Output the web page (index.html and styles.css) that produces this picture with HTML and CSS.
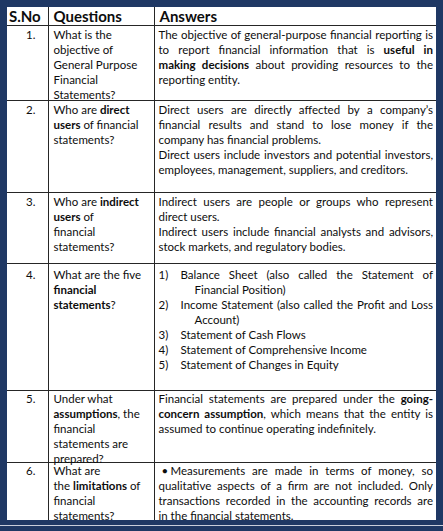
FILE: index.html
```html
<!DOCTYPE html>
<html lang="en">
<head>
<meta charset="utf-8">
<title>Financial Statements Q&amp;A</title>
<link rel="stylesheet" href="styles.css">
</head>
<body>
<div class="frame">
  <table class="qa">
    <colgroup>
      <col class="c-no"><col class="c-q"><col class="c-a">
    </colgroup>
    <thead>
      <tr class="head">
        <th class="no-h">S.No</th>
        <th>Questions</th>
        <th>Answers</th>
      </tr>
    </thead>
    <tbody>
      <tr class="r1">
        <td class="no"><div class="cell">1.</div></td>
        <td class="q"><div class="cell">What is the<br>objective of<br>General Purpose<br>Financial<br>Statements?</div></td>
        <td class="a"><div class="cell">
          <span class="j">The objective of general-purpose financial reporting is</span>
          <span class="j">to report financial information that is <b>useful in</b></span>
          <span class="j"><b>making decisions</b> about providing resources to the</span>
          <span class="l">reporting entity.</span>
        </div></td>
      </tr>
      <tr class="r2">
        <td class="no"><div class="cell">2.</div></td>
        <td class="q"><div class="cell">Who are <b>direct</b><br><b>users</b> of financial<br>statements?</div></td>
        <td class="a"><div class="cell">
          <span class="j">Direct users are directly affected by a company’s</span>
          <span class="j">financial results and stand to lose money if the</span>
          <span class="l">company has financial problems.</span>
          <span class="j">Direct users include investors and potential investors,</span>
          <span class="l">employees, management, suppliers, and creditors.</span>
        </div></td>
      </tr>
      <tr class="r3">
        <td class="no"><div class="cell">3.</div></td>
        <td class="q"><div class="cell">Who are <b>indirect</b><br><b>users</b> of<br>financial<br>statements?</div></td>
        <td class="a"><div class="cell">
          <span class="j">Indirect users are people or groups who represent</span>
          <span class="l">direct users.</span>
          <span class="j">Indirect users include financial analysts and advisors,</span>
          <span class="l">stock markets, and regulatory bodies.</span>
        </div></td>
      </tr>
      <tr class="r4">
        <td class="no"><div class="cell">4.</div></td>
        <td class="q"><div class="cell">What are the five<br><b>financial</b><br><b>statements</b>?</div></td>
        <td class="a"><div class="cell">
          <ol class="fs">
            <li><span class="j"><span class="num">1)</span>Balance Sheet (also called the Statement of</span>Financial Position)</li>
            <li><span class="j"><span class="num">2)</span>Income Statement (also called the Profit and Loss</span>Account)</li>
            <li><span class="num">3)</span>Statement of Cash Flows</li>
            <li><span class="num">4)</span>Statement of Comprehensive Income</li>
            <li><span class="num">5)</span>Statement of Changes in Equity</li>
          </ol>
        </div></td>
      </tr>
      <tr class="r5">
        <td class="no"><div class="cell">5.</div></td>
        <td class="q"><div class="cell">Under what<br><b>assumptions</b>, the<br>financial<br>statements are<br>prepared?</div></td>
        <td class="a"><div class="cell">
          <span class="j">Financial statements are prepared under the <b>going-</b></span>
          <span class="j"><b>concern assumption</b>, which means that the entity is</span>
          <span class="l">assumed to continue operating indefinitely.</span>
        </div></td>
      </tr>
      <tr class="r6">
        <td class="no"><div class="cell">6.</div></td>
        <td class="q"><div class="cell">What are<br>the <b>limitations</b> of<br>financial<br>statements?</div></td>
        <td class="a"><div class="cell">
          <span class="j"><span class="dot">•</span>Measurements are made in terms of money, so</span>
          <span class="j">qualitative aspects of a firm are not included. Only</span>
          <span class="j">transactions recorded in the accounting records are</span>
          <span class="l">in the financial statements.</span>
        </div></td>
      </tr>
    </tbody>
  </table>
  <div class="edge"></div>
</div>
</body>
</html>
```

FILE: styles.css
```css
html, body {
  margin: 0;
  padding: 0;
}

body {
  background: #1f3864;
  width: 443px;
  height: 531px;
  overflow: hidden;
  font-family: Lato, "Open Sans", sans-serif;
  color: #0d0d0d;
}

.frame {
  padding: 7px 7px 0 7px;
}

.qa {
  width: 429px;
  border-collapse: collapse;
  table-layout: fixed;
  background: #ffffff;
  font-size: 11.5px;
  line-height: 15px;
}

.c-no { width: 41px; }
.c-q { width: 106px; }
.c-a { width: 282px; }

.qa th,
.qa td {
  border: 1px solid #262626;
  vertical-align: top;
  text-align: left;
  padding: 0;
}

.qa tr > :first-child { border-left: none; }
.qa tr > :last-child { border-right: none; }
.head th { border-top: none; }
.r6 td { border-bottom: none; }

.head th {
  font-size: 15px;
  line-height: 18px;
  font-weight: 700;
  height: 18px;
  padding: 0 0 0 5px;
}

.head .no-h {
  padding-left: 2px;
}

.cell {
  overflow: visible;
}

.no .cell {
  text-align: right;
  padding-right: 12px;
}

.q .cell {
  padding-left: 5px;
}

.a .cell {
  padding-left: 4px;
  padding-right: 3px;
}

.r1 .cell { height: 73px; padding-top: 1px; }
.r2 .cell { height: 90px; padding-top: 1px; }
.r3 .cell { height: 69px; padding-top: 1px; }
.r4 .cell { height: 123px; padding-top: 3px; }
.r5 .cell { height: 71px; padding-top: 0; }
.r6 .cell { height: 57px; padding-top: 0; }

.j {
  display: block;
  text-align: justify;
  text-align-last: justify;
}

.l {
  display: block;
}

.fs {
  list-style: none;
  margin: 0;
  padding: 0;
}

.fs li {
  padding-left: 36px;
  text-indent: -36px;
}

.num {
  display: inline-block;
  width: 22px;
  text-indent: 0;
}

.dot {
  display: inline-block;
  width: 9px;
  margin-left: 3px;
}

.edge {
  height: 1px;
  margin: 5px -7px 0 -7px;
  background: #c9ceda;
}
```
